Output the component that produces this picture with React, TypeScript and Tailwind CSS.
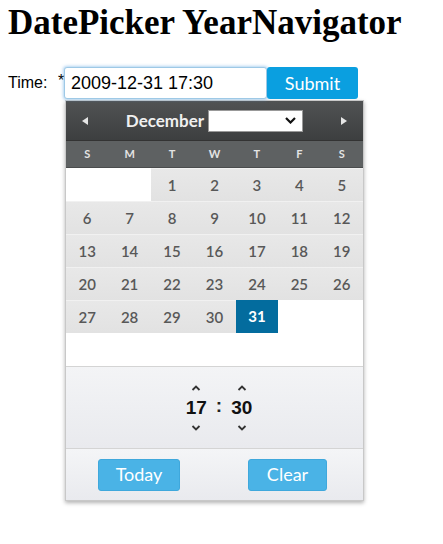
import React from "react";

const days = ["S", "M", "T", "W", "T", "F", "S"];

// December 2009 starts on Tuesday
const cells: (number | null)[] = [
  null, null,
  ...Array.from({ length: 31 }, (_, i) => i + 1),
];

function Chevron({ up }: { up?: boolean }) {
  return (
    <svg width="10" height="6" viewBox="0 0 10 6" className="block">
      <path
        d={up ? "M1.5 5 L5 1.5 L8.5 5" : "M1.5 1 L5 4.5 L8.5 1"}
        fill="none"
        stroke="#333"
        strokeWidth="1.8"
      />
    </svg>
  );
}

export default function App() {
  return (
    <div className="px-2 pt-[3px] pb-2 text-black font-['Liberation_Sans',Arial,sans-serif]">
      {/* 標題 */}
      <h1 className="mb-[24px] text-[35px] font-bold leading-[40px] font-['Liberation_Serif',serif]">
        DatePicker YearNavigator
      </h1>

      {/* 表單列 */}
      <div className="flex items-center h-8 text-base">
        <span className="w-[50px]">Time:</span>
        <span className="w-[6px] -mt-1">*</span>
        <input
          readOnly
          value="2009-12-31 17:30"
          className="w-[203px] h-8 border border-[#9ec9e6] rounded-[3px] px-[6px] text-[18px] outline-none shadow-[0_0_3px_1px_rgba(100,170,230,0.5)] bg-white"
        />
        <button className="w-[91px] h-8 bg-[#0a9fe0] text-white text-[18px] rounded-[3px] font-['Lato',sans-serif]">
          Submit
        </button>
      </div>

      {/* ====== 彈出日曆 ====== */}
      <div className="ml-[57px] mt-px w-[299px] border border-[#c8c8c8] bg-white shadow-[0_2px_4px_rgba(0,0,0,0.3)] font-['Lato',sans-serif]">
        {/* 月份列 */}
        <div className="h-[40px] flex items-center bg-gradient-to-b from-[#505253] to-[#3d3f40] border-b border-[#333]">
          <span className="w-[38px] flex justify-center">
            <svg width="6" height="8" viewBox="0 0 6 8"><path d="M6 0 L0 4 L6 8 Z" fill="#e6e6e6" /></svg>
          </span>
          <div className="flex-1 flex items-center justify-center gap-[4px]">
            <span className="text-[17px] font-bold text-[#f0f0f0]">December</span>
            <div className="w-[95px] h-[22px] bg-white border border-[#999] flex items-center justify-end pr-[6px]">
              <svg width="11" height="7" viewBox="0 0 11 7"><path d="M1 1 L5.5 5.5 L10 1" fill="none" stroke="#111" strokeWidth="2.2" /></svg>
            </div>
          </div>
          <span className="w-[38px] flex justify-center">
            <svg width="6" height="8" viewBox="0 0 6 8"><path d="M0 0 L6 4 L0 8 Z" fill="#e6e6e6" /></svg>
          </span>
        </div>

        {/* 星期列 */}
        <div className="grid grid-cols-7 h-[27px] items-center bg-[#5e6162] border-b border-[#4a4c4d]">
          {days.map((d, i) => (
            <span key={i} className="text-center text-[11px] font-bold text-[#e4e4e4]">{d}</span>
          ))}
        </div>

        {/* 日期格 */}
        <div className="grid grid-cols-7 grid-rows-[repeat(6,33px)]">
          {cells.map((n, i) =>
            n === null ? (
              <span key={i} className="bg-white" />
            ) : n === 31 ? (
              <span key={i} className="flex items-center justify-center bg-[#036c9e] text-white text-[15px] font-bold">
                {n}
              </span>
            ) : (
              <span
                key={i}
                className="flex items-center justify-center bg-gradient-to-b from-[#e8e8e8] to-[#e2e2e2] border-t border-[#f1f1f1] text-[#585858] text-[15px] font-semibold"
              >
                {n}
              </span>
            )
          )}
        </div>

        {/* 時間 */}
        <div className="h-[82px] border-t border-[#d4d4d4] bg-gradient-to-b from-[#f3f4f6] to-[#e9eaee] flex items-center justify-center gap-[9px] pl-[9px] font-['Liberation_Sans',sans-serif]">
          <div className="flex flex-col items-center gap-[6px]">
            <Chevron up />
            <span className="text-[19px] leading-[22px] text-[#111] font-bold">17</span>
            <Chevron />
          </div>
          <span className="text-[19px] font-bold text-[#222] -mt-[2px]">:</span>
          <div className="flex flex-col items-center gap-[6px]">
            <Chevron up />
            <span className="text-[19px] leading-[22px] text-[#111] font-bold">30</span>
            <Chevron />
          </div>
        </div>

        {/* 按鈕 */}
        <div className="h-[52px] border-t border-[#d4d4d4] bg-gradient-to-b from-[#f4f5f7] to-[#e9eaee] flex items-center pl-[32px] gap-[68px]">
          <button className="w-[82px] h-8 rounded-[3px] bg-[#4ab3e6] text-white text-[18px] border border-[#3fa8dc]">Today</button>
          <button className="w-[79px] h-8 rounded-[3px] bg-[#4ab3e6] text-white text-[18px] border border-[#3fa8dc]">Clear</button>
        </div>
      </div>
    </div>
  );
}
